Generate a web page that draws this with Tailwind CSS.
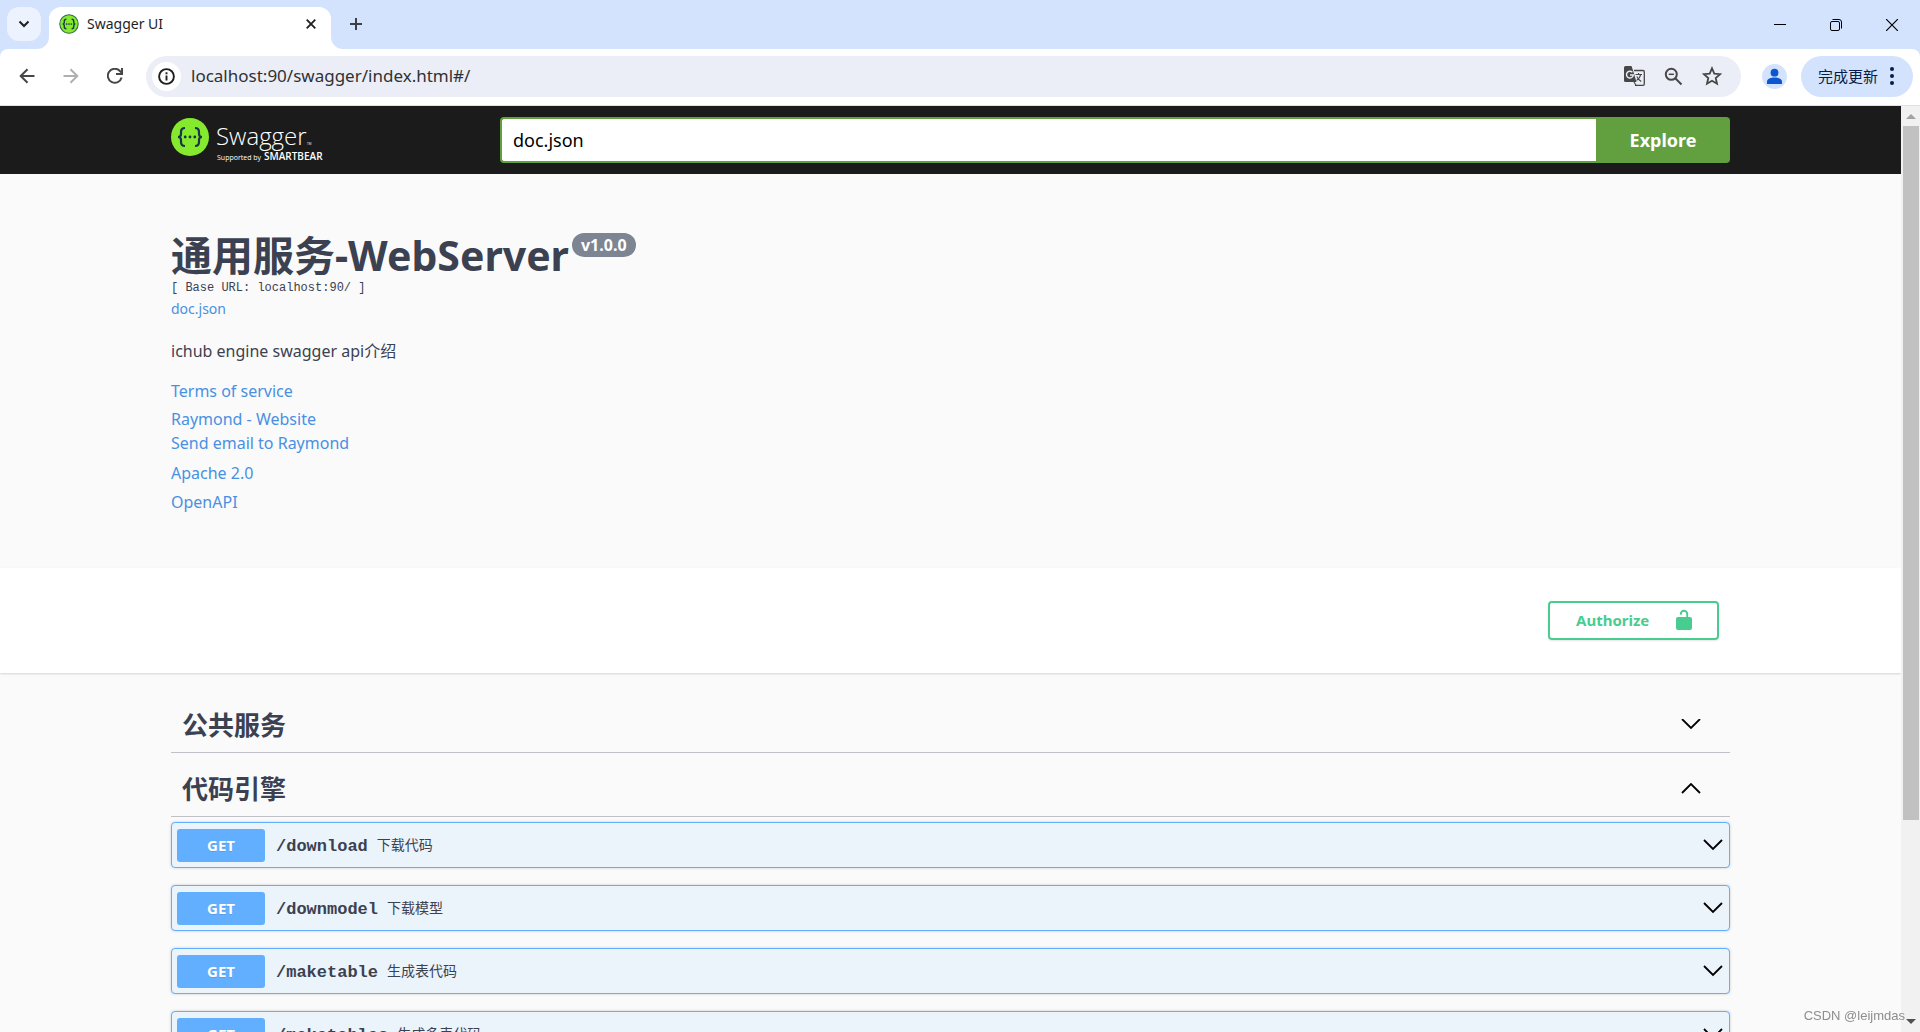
<!DOCTYPE html>
<html lang="zh">
<head>
    <meta charset="UTF-8">
    <meta name="viewport" content="width=device-width, initial-scale=1.0">
    <title>Swagger UI</title>
    <script src="https://cdn.jsdelivr.net/npm/@tailwindcss/browser@4"></script>
</head>
<body class="h-screen flex flex-col overflow-hidden bg-[#fafafa] text-[#3b4151] font-['Noto_Sans','Noto_Sans_CJK_SC',sans-serif]">

    <!-- Tab strip -->
    <div class="shrink-0 h-[49px] bg-[#d3e3fd] flex items-end px-[7px]">
        <button type="button" aria-label="Search tabs" class="w-[34px] h-[34px] mb-2 rounded-xl bg-[#ecf3fe] flex items-center justify-center">
            <svg class="w-3 h-3" viewBox="0 0 12 12" fill="none" stroke="#1f1f1f" stroke-width="2"><path d="M1.500 3.500 6 8l4.500-4.500"/></svg>
        </button>
        <div class="relative ml-2 w-[282px] h-[42px] rounded-t-xl bg-white flex items-center pl-[10px] pr-3 pb-2">
            <svg class="absolute -left-3 bottom-0 w-3 h-3" viewBox="0 0 12 12"><path d="M12 0v12H0A12 12 0 0 0 12 0z" fill="#fff"/></svg>
            <svg class="absolute -right-3 bottom-0 w-3 h-3" viewBox="0 0 12 12"><path d="M0 0v12h12A12 12 0 0 1 0 0z" fill="#fff"/></svg>
            <svg class="w-5 h-5" viewBox="0 0 38 38">
                <circle cx="19" cy="19" r="17.500" fill="#85ea2d" stroke="#2f6b4a" stroke-width="2"/>
                <g fill="none" stroke="#173647" stroke-width="2.600"><path d="M14 10q-4 0-4 4v2q0 3-3 3 3 0 3 3v2q0 4 4 4M24 10q4 0 4 4v2q0 3 3 3-3 0-3 3v2q0 4-4 4"/></g>
                <g fill="#173647"><circle cx="14.500" cy="19" r="1.600"/><circle cx="19" cy="19" r="1.600"/><circle cx="23.500" cy="19" r="1.600"/></g>
            </svg>
            <span class="ml-2 flex-1 text-sm text-[#1f1f1f]">Swagger UI</span>
            <button type="button" aria-label="Close tab" class="w-4 h-4 flex items-center justify-center">
                <svg class="w-[10px] h-[10px]" viewBox="0 0 10 10" stroke="#1f1f1f" stroke-width="1.800"><path d="M.7.700l8.600 8.600M9.300.700.700 9.300"/></svg>
            </button>
        </div>
        <button type="button" aria-label="New tab" class="ml-[18px] mb-[18px] w-[14px] h-[14px]">
            <svg class="w-[14px] h-[14px]" viewBox="0 0 14 14" stroke="#3c3f43" stroke-width="2"><path d="M7 1v12M1 7h12"/></svg>
        </button>
        <div class="ml-auto mb-[18px] flex items-center gap-11 pr-[15px]">
            <button type="button" aria-label="Minimize" class="w-3 h-3"><svg class="w-3 h-3" viewBox="0 0 12 12" stroke="#000"><path d="M0 5.500h12"/></svg></button>
            <button type="button" aria-label="Restore" class="w-3 h-3"><svg class="w-3 h-3" viewBox="0 0 12 12" fill="none" stroke="#000"><rect x=".5" y="2.500" width="9" height="9" rx="1.500"/><path d="M2.500.5H9q2.500 0 2.500 2.500v6.500"/></svg></button>
            <button type="button" aria-label="Close" class="w-3 h-3"><svg class="w-3 h-3" viewBox="0 0 12 12" stroke="#000" stroke-width="1.200"><path d="m0 0 12 12M12 0 0 12"/></svg></button>
        </div>
    </div>

    <!-- Toolbar -->
    <div class="shrink-0 bg-[#d3e3fd]">
        <div class="h-[57px] rounded-t-lg bg-white border-b border-[#dfe1e5] flex items-center pl-[19px] pr-[7px] pb-[2px]">
            <button type="button" aria-label="Back"><svg class="w-4 h-4" viewBox="0 0 16 16" fill="none" stroke="#474747" stroke-width="2"><path d="M15.500 8H2M8.500 1.200 1.700 8l6.800 6.800"/></svg></button>
            <button type="button" aria-label="Forward" class="ml-7"><svg class="w-4 h-4" viewBox="0 0 16 16" fill="none" stroke="#b0b0b0" stroke-width="2"><path d="M.5 8H14M7.500 1.200 14.300 8l-6.800 6.800"/></svg></button>
            <button type="button" aria-label="Reload" class="ml-7"><svg class="w-4 h-4" viewBox="0 0 16 16" fill="none" stroke="#474747" stroke-width="2"><path d="M14.600 9.500A7 7 0 1 1 12.900 3L15 5"/><path d="M15 0v6H9"/></svg></button>
            <div class="ml-[23px] flex-1 h-[41px] rounded-full bg-[#ebeef7] flex items-center pl-[6px] pr-[19px]">
                <span class="w-[29px] h-[29px] rounded-full bg-white flex items-center justify-center">
                    <svg class="w-[17px] h-[17px]" viewBox="0 0 17 17" fill="none" stroke="#1f1f1f" stroke-width="1.900"><circle cx="8.500" cy="8.500" r="7.400"/><path d="M8.500 7.500v5M8.500 4.300v2"/></svg>
                </span>
                <input type="text" aria-label="Address" value="localhost:90/swagger/index.html#/" class="ml-[10px] flex-1 bg-transparent text-[17px] text-[#303134] outline-none">
                <div class="flex items-center gap-[19px]">
                    <svg class="w-[21px] h-[21px]" viewBox="0 0 21 21">
                        <path d="M10 4.500h9a1.300 1.300 0 0 1 1.300 1.300V18a1.300 1.300 0 0 1-1.300 1.300h-8" fill="none" stroke="#474747" stroke-width="1.300"/>
                        <path d="M1.500 0h6l1.200 3.500L12.500 16h-11A1.500 1.500 0 0 1 0 14.500v-13A1.500 1.500 0 0 1 1.500 0z" fill="#474747"/>
                        <path d="M8.400 6.300A3.400 3.400 0 1 0 9.300 9H6" fill="none" stroke="#ebeef7" stroke-width="1.400"/>
                        <path d="M11.500 8.500h6.500M14.500 7v1.500M16.800 8.500q-1 4-4.300 6M12.800 10.500q1.500 3 4.400 5M10 16l2.500 4" fill="none" stroke="#474747" stroke-width="1.100"/>
                    </svg>
                    <svg class="w-[19px] h-[19px]" viewBox="0 0 19 19" fill="none" stroke="#474747" stroke-width="2"><circle cx="7.300" cy="7.300" r="5.500"/><path d="m11.500 11.500 6 6"/><path d="M4.700 7.300h5.200" stroke-width="1.500"/></svg>
                    <svg class="w-5 h-5" viewBox="0 0 20 20" fill="none" stroke="#474747" stroke-width="1.800"><path d="m10 2.300 2.300 5.400 5.800.5-4.400 3.800 1.300 5.700-5-3-5 3L6.300 12 1.900 8.200l5.800-.5z"/></svg>
                </div>
            </div>
            <button type="button" aria-label="Profile" class="ml-[21px]">
                <svg class="w-[25px] h-[25px]" viewBox="0 0 25 25"><circle cx="12.500" cy="12.500" r="12.500" fill="#d3e3fd"/><circle cx="12.500" cy="8.700" r="3.900" fill="#0b57d0"/><path d="M5 20v-2.500c0-2.700 4-4 7.500-4s7.500 1.300 7.500 4V20z" fill="#0b57d0"/></svg>
            </button>
            <button type="button" class="ml-[14px] w-28 h-[41px] rounded-full bg-[#d3e3fd] flex items-center justify-between pl-[17px] pr-[19px] text-[#041e49] text-[15px]">
                完成更新
                <svg class="w-1 h-[18px]" viewBox="0 0 4 18" fill="#041e49"><circle cx="2" cy="2" r="2"/><circle cx="2" cy="9" r="2"/><circle cx="2" cy="16" r="2"/></svg>
            </button>
        </div>
    </div>

    <!-- Page viewport -->
    <div class="flex-1 min-h-0 flex">
        <main class="flex-1 min-w-0 overflow-hidden">
            <header class="h-[68px] bg-[#1b1b1b] px-[171px] flex items-center">
                <a href="#" aria-label="Swagger" class="w-[329px] shrink-0">
                    <svg class="w-[160px] h-[46px]" viewBox="0 0 160 46" font-family="Open Sans, Noto Sans, sans-serif" fill="#fff">
                        <circle cx="19" cy="20" r="19" fill="#85ea2d"/>
                        <g fill="none" stroke="#173647" stroke-width="2.200"><path d="M14 11q-4 0-4 4v2q0 3-3 3 3 0 3 3v2q0 4 4 4M24 11q4 0 4 4v2q0 3 3 3-3 0-3 3v2q0 4-4 4"/></g>
                        <g fill="#173647"><circle cx="14.200" cy="20" r="1.400"/><circle cx="19" cy="20" r="1.400"/><circle cx="23.800" cy="20" r="1.400"/></g>
                        <text x="45" y="28" font-size="24" font-weight="300">Swagger</text>
                        <text x="136" y="28" font-size="3">TM</text>
                        <text x="46" y="43" font-size="7">Supported by</text>
                        <text x="93" y="43" font-size="10" font-weight="600">SMARTBEAR</text>
                    </svg>
                </a>
                <form class="flex-1 flex h-[46px]">
                    <input type="text" aria-label="Definition URL" value="doc.json" class="flex-1 min-w-0 rounded-l border-2 border-r-0 border-[#62a03f] bg-white px-[11px] text-lg text-black outline-none">
                    <button type="button" class="w-[134px] rounded-r bg-[#62a03f] text-lg font-bold text-white">Explore</button>
                </form>
            </header>

            <section class="px-[171px] pt-14 pb-14">
                <h1 class="flex items-start text-[41px] leading-[50px] font-bold">通用服务-WebServer<span class="ml-[3px] mt-[3px] h-6 rounded-full bg-[#7d8492] px-[9px] text-base leading-6 font-bold text-white">v1.0.0</span></h1>
                <pre class="text-xs leading-4 font-['Liberation_Mono',monospace]">[ Base URL: localhost:90/ ]</pre>
                <a href="#" class="block mt-[3px] text-sm leading-5 text-[#4990e2]">doc.json</a>
                <p class="mt-[22px] text-base leading-5">ichub engine swagger api介绍</p>
                <div class="mt-5 text-base leading-5 text-[#4990e2] flex flex-col items-start">
                    <a href="#">Terms of service</a>
                    <a href="#" class="mt-2">Raymond - Website</a>
                    <a href="#" class="mt-1">Send email to Raymond</a>
                    <a href="#" class="mt-[10px]">Apache 2.0</a>
                    <a href="#" class="mt-[9px]">OpenAPI</a>
                </div>
            </section>

            <section class="h-[105px] bg-white shadow-[0_1px_2px_0_rgba(0,0,0,0.15)] pl-[171px] pr-[182px] flex items-center justify-end">
                <button type="button" class="h-[39px] w-[171px] rounded border-2 border-[#49cc90] shadow-[0_1px_2px_rgba(0,0,0,0.1)] pl-[26px] pr-[25px] flex items-center justify-between text-[15px] font-bold text-[#49cc90]">
                    Authorize
                    <svg class="w-4 h-6" viewBox="0 0 16 24"><path d="M4.800 5.800V5a3.200 3.200 0 0 1 6.400 0v5" fill="none" stroke="#49cc90" stroke-width="1.900"/><rect y="8" width="16" height="13" rx="2" fill="#49cc90"/></svg>
                </button>
            </section>

            <section class="px-[171px] pt-4">
                <h2 class="h-16 border-b border-[#bfc1c6] pl-[11px] pr-[29px] pt-2 flex items-center justify-between text-[26px] leading-8 font-bold">
                    公共服务
                    <svg class="w-5 h-3" viewBox="0 0 20 12" fill="none" stroke="#000" stroke-width="1.800"><path d="m1 0 9 9 9-9"/></svg>
                </h2>
                <h2 class="h-16 border-b border-[#bfc1c6] pl-[11px] pr-[29px] pt-2 flex items-center justify-between text-[26px] leading-8 font-bold">
                    代码引擎
                    <svg class="w-5 h-3" viewBox="0 0 20 12" fill="none" stroke="#000" stroke-width="1.800"><path d="m1 10 9-9 9 9"/></svg>
                </h2>
                <div id="operations" class="mt-[5px] space-y-[17px]"></div>
            </section>
        </main>

        <!-- Scrollbar -->
        <div class="relative w-[19px] bg-[#f1f1f1] flex flex-col items-center justify-between pt-2 pb-2">
            <svg class="w-[10px] h-[5px]" viewBox="0 0 10 5"><path d="M0 5h10L5 0z" fill="#a3a3a3"/></svg>
            <div class="absolute top-5 bottom-[212px] left-[2px] right-px bg-[#c1c1c1]"></div>
            <svg class="w-[10px] h-[5px]" viewBox="0 0 10 5"><path d="M0 0h10L5 5z" fill="#505050"/></svg>
        </div>
    </div>

    <div class="fixed right-[15px] bottom-[6px] text-[13px] leading-5 text-[#8d8d8d] font-['Liberation_Sans',sans-serif]">CSDN @leijmdas</div>

    <script>
        const operations = [
            { path: '/download', summary: '下载代码' },
            { path: '/downmodel', summary: '下载模型' },
            { path: '/maketable', summary: '生成表代码' },
            { path: '/maketables', summary: '生成多表代码' },
        ];

        document.getElementById('operations').innerHTML = operations.map(op => `
            <div class="h-[46px] rounded border border-[#61affe] bg-[#ebf3fb] shadow-[0_0_3px_rgba(0,0,0,0.19)] pl-[5px] pr-[6px] flex items-center">
                <button type="button" class="w-[88px] h-[33px] rounded-[3px] bg-[#61affe] text-[15px] font-bold text-white [text-shadow:0_1px_0_rgba(0,0,0,0.1)]">GET</button>
                <span class="ml-[11px] pt-[3px] text-[17px] leading-6 font-bold font-['Liberation_Mono',monospace]">${op.path}</span>
                <span class="ml-[9px] flex-1 text-sm">${op.summary}</span>
                <svg class="w-5 h-3" viewBox="0 0 20 12" fill="none" stroke="#000" stroke-width="1.800"><path d="m1 1 9 9 9-9"/></svg>
            </div>
        `).join('');
    </script>
</body>
</html>
